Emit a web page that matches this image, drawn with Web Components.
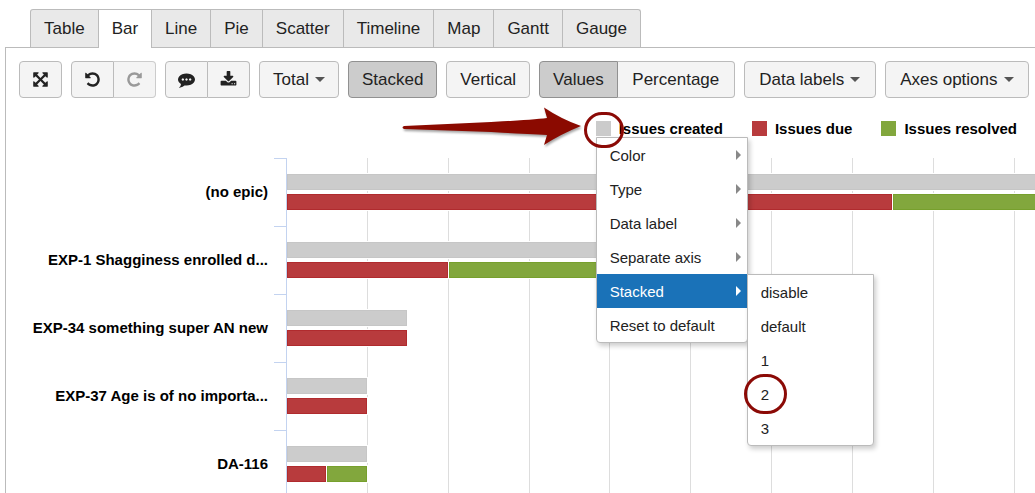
<!DOCTYPE html>
<html lang="en">
<head>
<meta charset="utf-8">
<title>Bar chart</title>
<style>
  body { margin: 0; height: 100vh; overflow: hidden; background: #fff; color: #222; font: 17px/20px "Liberation Sans", Arial, sans-serif; }
</style>
</head>
<body>
<chart-page></chart-page>

<script>
const define = (name, html, setup) => {
  const template = document.createElement('template');
  template.innerHTML = html;
  customElements.define(name, class extends HTMLElement {
    connectedCallback() {
      if (this.shadowRoot) return;
      const root = this.attachShadow({ mode: 'open' });
      root.append(template.content.cloneNode(true));
      if (setup) setup(this, root);
    }
  });
};

const ICONS = {
  expand: 'M1411 541l-355 355 355 355 144-144q29-31 70-14 39 17 39 59v448q0 26-19 45t-45 19h-448q-42 0-59-40-17-39 14-69l144-144-355-355-355 355 144 144q31 30 14 69-17 40-59 40h-448q-26 0-45-19t-19-45v-448q0-42 40-59 39-17 69 14l144 144 355-355-355-355-144 144q-19 19-45 19-12 0-24-5-40-17-40-59v-448q0-26 19-45t45-19h448q42 0 59 40 17 39-14 69l-144 144 355 355 355-355-144-144q-31-30-14-69 17-40 59-40h448q26 0 45 19t19 45v448q0 42-39 59-13 5-25 5-26 0-45-19z',
  undo: 'M1664 896q0 156-61 298t-164 245-245 164-298 61q-172 0-327-72.500t-264-204.500q-7-10-6.500-22.500t8.500-20.500l137-138q10-9 25-9 16 2 23 12 73 95 179 147t225 52q104 0 198.500-40.500t163.500-109.500 109.500-163.500 40.500-198.500-40.500-198.500-109.500-163.500-163.500-109.500-198.500-40.500q-98 0-188 35.500t-160 101.500l137 138q31 30 14 69-17 40-59 40h-448q-26 0-45-19t-19-45v-448q0-42 40-59 39-17 69 14l130 129q107-101 244.500-156.500t284.500-55.500q156 0 298 61t245 164 164 245 61 298z',
  comment: 'M640 896q0-53-37.500-90.500t-90.500-37.500-90.500 37.500-37.500 90.500 37.500 90.500 90.500 37.500 90.500-37.500 37.500-90.500zm384 0q0-53-37.500-90.500t-90.500-37.500-90.500 37.500-37.500 90.500 37.500 90.500 90.500 37.500 90.500-37.500 37.500-90.500zm384 0q0-53-37.500-90.500t-90.500-37.500-90.500 37.500-37.500 90.500 37.500 90.500 90.500 37.500 90.500-37.500 37.500-90.500zm384 0q0 174-120 321.500t-326 233-450 85.500q-110 0-211-18-173 173-435 229-52 10-86 13-12 1-22-6t-13-18q-4-15 20-37 5-5 23.500-21.500t25.500-23.500 23.500-25.500 24-31.500 20.500-37 20-48 14.500-57.500 12.500-72.500q-146-90-229.500-216.500t-83.500-269.500q0-174 120-321.500t326-233 450-85.500 450 85.500 326 233 120 321.500z',
  download: 'M1344 1344q0-26-19-45t-45-19-45 19-19 45 19 45 45 19 45-19 19-45zm256 0q0-26-19-45t-45-19-45 19-19 45 19 45 45 19 45-19 19-45zm128-224v320q0 40-28 68t-68 28h-1472q-40 0-68-28t-28-68v-320q0-40 28-68t68-28h465l135 136q58 56 136 56t136-56l136-136h464q40 0 68 28t28 68zm-325-569q17 41-14 70l-448 448q-18 19-45 19t-45-19l-448-448q-31-29-14-70 17-39 59-39h256v-448q0-26 19-45t45-19h256q26 0 45 19t19 45v448h256q42 0 59 39z'
};

define('fa-icon', `
  <style>
    :host { display: block; width: 17px; height: 17px; }
    svg { display: block; width: 100%; height: 100%; fill: currentColor; }
    :host([flip]) svg { transform: scaleX(-1); }
  </style>
  <svg viewBox="0 0 1792 1792" aria-hidden="true"><path/></svg>
`, (host, root) => root.querySelector('path').setAttribute('d', ICONS[host.getAttribute('name')]));

define('chart-tab', `
  <style>
    :host { display: block; }
    button { display: block; box-sizing: border-box; height: 38px; margin: 0; padding: 0 13px; border: solid #bbb; border-width: 1px 1px 0 0; background: #e9e9e9; color: #222; font: inherit; }
    :host(:first-child) button { border-left-width: 1px; border-top-left-radius: 3px; }
    :host(:last-child) button { border-top-right-radius: 3px; }
    :host([selected]) { position: relative; margin-bottom: -1px; }
    :host([selected]) button { height: 39px; background: #fff; }
  </style>
  <button type="button" role="tab"><slot></slot></button>
`, (host, root) => root.querySelector('button').setAttribute('aria-selected', host.hasAttribute('selected')));

define('tool-button', `
  <style>
    :host { display: block; }
    :host([grow]) { flex: 1 0 auto; }
    button { display: flex; align-items: center; justify-content: center; gap: 6px; box-sizing: border-box; width: 100%; height: 37px; margin: 0; padding: 0 13px; border: 1px solid #bbb; border-radius: 4px; background: #f4f4f4; color: #222; font: inherit; white-space: nowrap; }
    :host([icon]) button { padding: 0 12px; }
    :host([pressed]) button { background: #ccc; border-color: #919191; }
    :host([disabled]) button { color: #999; border-color: #ccc; }
    :host([join=start]) button { border-top-right-radius: 0; border-bottom-right-radius: 0; }
    :host([join=end]) button { border-left: 0; border-top-left-radius: 0; border-bottom-left-radius: 0; }
    .caret { border: solid transparent; border-width: 5px 5px 0; border-top-color: #555; }
  </style>
  <button type="button"><slot></slot><span class="caret"></span></button>
`, (host, root) => {
  const button = root.querySelector('button');
  if (!host.hasAttribute('menu')) root.querySelector('.caret').remove();
  button.disabled = host.hasAttribute('disabled');
  if (host.hasAttribute('label')) button.setAttribute('aria-label', host.getAttribute('label'));
  if (host.hasAttribute('pressed')) button.setAttribute('aria-pressed', 'true');
});

define('button-group', `
  <style>
    :host { display: flex; }
    :host([grow]) { flex: 1 0 auto; }
  </style>
  <slot></slot>
`);

define('legend-item', `
  <style>
    :host { display: flex; align-items: center; gap: 8px; position: relative; color: #000; font-weight: bold; font-size: 15px; line-height: 17px; white-space: nowrap; }
    .swatch { width: 15px; height: 15px; background: var(--color); }
  </style>
  <span class="swatch"></span><span><slot></slot></span><slot name="over"></slot>
`, (host) => host.style.setProperty('--color', host.getAttribute('color')));

define('menu-item', `
  <style>
    :host { display: block; position: relative; }
    button { display: flex; align-items: center; justify-content: space-between; box-sizing: border-box; width: 100%; height: 34px; margin: 0; padding: 0 6px 0 13px; border: 0; background: none; color: #222; font: inherit; text-align: left; }
    :host([active]) button { background: #1a72b8; color: #fff; }
    .arrow { display: none; border: solid transparent; border-width: 5px 0 5px 5px; border-left-color: #888; }
    :host([submenu]) .arrow { display: block; }
    :host([active]) .arrow { border-left-color: #fff; }
  </style>
  <button type="button" role="menuitem"><span><slot></slot></span><span class="arrow"></span></button>
  <slot name="over"></slot>
`);

define('popup-menu', `
  <style>
    :host { display: block; box-sizing: border-box; position: absolute; top: 17px; left: 0; width: 152px; border: 1px solid #bbb; border-radius: 0 0 4px 4px; background: #fff; box-shadow: 2px 3px 5px rgba(0,0,0,.2); font-weight: normal; font-size: 15px; line-height: 17px; z-index: 1; }
    :host([sub]) { top: 0; left: 100%; width: 127px; }
  </style>
  <slot></slot>
`, (host) => host.setAttribute('role', 'menu'));

define('callout-ring', `
  <style>
    :host { display: block; box-sizing: border-box; position: absolute; top: -8px; left: -12px; width: 40px; height: 36px; border: 3px solid #8b0a06; border-radius: 18px; z-index: 2; pointer-events: none; }
    :host([option]) { top: -3px; left: -4px; width: 43px; height: 40px; border-radius: 20px; }
  </style>
`);

define('callout-arrow', `
  <style>
    :host { display: block; position: absolute; right: 100%; top: -14px; width: 180px; height: 40px; margin-right: 15px; pointer-events: none; }
    svg { display: block; overflow: visible; filter: drop-shadow(1px 2px 1px rgba(0,0,0,.35)); }
  </style>
  <svg width="180" height="40" viewBox="0 0 180 40" aria-hidden="true">
    <path fill="#8b0a00" d="M3 20 L90 16 Q130 14 146 12 L143 1.500 Q160 13 180 20 Q160 28 143 39 L146 29 Q125 28 90 26 L3 23 Q0 21.500 3 20Z"/>
  </svg>
`);

define('bar-row', `
  <style>
    :host { display: grid; grid-template-columns: 268px 13px minmax(0, 1fr); height: 68px; align-items: center; }
    .label { padding-right: 6px; color: #000; font-weight: bold; font-size: 15px; line-height: 18px; text-align: right; white-space: nowrap; }
    .axis { align-self: stretch; border: solid #c3d3f0; border-width: 1px 1px 0 0; }
    .bars { display: grid; grid-template-columns: 100%; row-gap: 2px; }
    .bar { display: flex; }
    .bar i { display: block; flex: none; box-sizing: border-box; height: 18px; border: solid #fff; border-width: 1px 1px 1px 0; width: calc(var(--v) * 100% / 9.25); }
    .created { background: #ccc; box-shadow: inset 0 0 0 1px #c6c6c6; }
    .due { background: #b83b3d; box-shadow: inset 0 0 0 1px #b02b2e; }
    .resolved { background: #82a73d; box-shadow: inset 0 0 0 1px #77a02d; }
  </style>
  <div class="label"><slot></slot></div>
  <div class="axis"></div>
  <div class="bars"></div>
`, (host, root) => {
  const bars = root.querySelector('.bars');
  for (const stack of [['created'], ['due', 'resolved']]) {
    const bar = document.createElement('div');
    bar.className = 'bar';
    for (const series of stack) {
      const value = host.getAttribute(series);
      if (!value) continue;
      const segment = document.createElement('i');
      segment.className = series;
      segment.style.setProperty('--v', value);
      bar.append(segment);
    }
    bars.append(bar);
  }
});

define('bar-plot', `
  <style>
    :host { display: block; position: relative; overflow: hidden; }
    .grid { position: absolute; inset: 0 0 0 281px; display: grid; grid-template-columns: repeat(9, 4fr) 1fr; }
    .grid span { border-right: 1px solid #ddd; }
    .grid span:last-child { border: 0; }
    .rows { position: relative; }
  </style>
  <div class="grid"></div>
  <div class="rows"><slot></slot></div>
`, (host, root) => {
  const grid = root.querySelector('.grid');
  for (let i = 0; i < 10; i++) grid.append(document.createElement('span'));
});

define('chart-page', `
  <style>
    :host { display: block; padding: 9px 0 0 5px; }
    .tabs { display: flex; margin-left: 25px; }
    .panel { border: solid #bbb; border-width: 1px 0 0 1px; }
    .toolbar { display: flex; gap: 9px; padding: 13px 6px 0 13px; }
    .legend { display: flex; justify-content: flex-end; gap: 29px; margin: 22px 18px 0 0; position: relative; z-index: 1; }
    bar-plot { margin-top: 21px; }
  </style>
  <div class="tabs" role="tablist">
    <chart-tab>Table</chart-tab><chart-tab selected>Bar</chart-tab><chart-tab>Line</chart-tab><chart-tab>Pie</chart-tab><chart-tab>Scatter</chart-tab><chart-tab>Timeline</chart-tab><chart-tab>Map</chart-tab><chart-tab>Gantt</chart-tab><chart-tab>Gauge</chart-tab>
  </div>
  <div class="panel">
    <div class="toolbar">
      <tool-button icon label="Expand"><fa-icon name="expand"></fa-icon></tool-button>
      <button-group>
        <tool-button icon join="start" label="Undo"><fa-icon name="undo"></fa-icon></tool-button>
        <tool-button icon join="end" disabled label="Redo"><fa-icon name="undo" flip></fa-icon></tool-button>
      </button-group>
      <button-group>
        <tool-button icon join="start" label="Comment"><fa-icon name="comment"></fa-icon></tool-button>
        <tool-button icon join="end" label="Download"><fa-icon name="download"></fa-icon></tool-button>
      </button-group>
      <tool-button menu>Total</tool-button>
      <tool-button pressed>Stacked</tool-button>
      <tool-button>Vertical</tool-button>
      <button-group grow>
        <tool-button pressed join="start">Values</tool-button>
        <tool-button join="end" grow>Percentage</tool-button>
      </button-group>
      <tool-button menu grow>Data labels</tool-button>
      <tool-button menu grow>Axes options</tool-button>
    </div>
    <div class="legend">
      <legend-item color="#cbcbcb">Issues created
        <callout-arrow slot="over"></callout-arrow>
        <popup-menu slot="over">
          <menu-item submenu>Color</menu-item>
          <menu-item submenu>Type</menu-item>
          <menu-item submenu>Data label</menu-item>
          <menu-item submenu>Separate axis</menu-item>
          <menu-item submenu active>Stacked
            <popup-menu sub slot="over">
              <menu-item>disable</menu-item>
              <menu-item>default</menu-item>
              <menu-item>1</menu-item>
              <menu-item>2<callout-ring option slot="over"></callout-ring></menu-item>
              <menu-item>3</menu-item>
            </popup-menu>
          </menu-item>
          <menu-item>Reset to default</menu-item>
        </popup-menu>
        <callout-ring slot="over"></callout-ring>
      </legend-item>
      <legend-item color="#b83b3d">Issues due</legend-item>
      <legend-item color="#82a73d">Issues resolved</legend-item>
    </div>
    <bar-plot>
      <bar-row created="9.5" due="7.5" resolved="2">(no epic)</bar-row>
      <bar-row created="5" due="2" resolved="3">EXP-1 Shagginess enrolled d...</bar-row>
      <bar-row created="1.5" due="1.5">EXP-34 something super AN new</bar-row>
      <bar-row created="1" due="1">EXP-37 Age is of no importa...</bar-row>
      <bar-row created="1" due="0.5" resolved="0.5">DA-116</bar-row>
    </bar-plot>
  </div>
`);
</script>
</body>
</html>
